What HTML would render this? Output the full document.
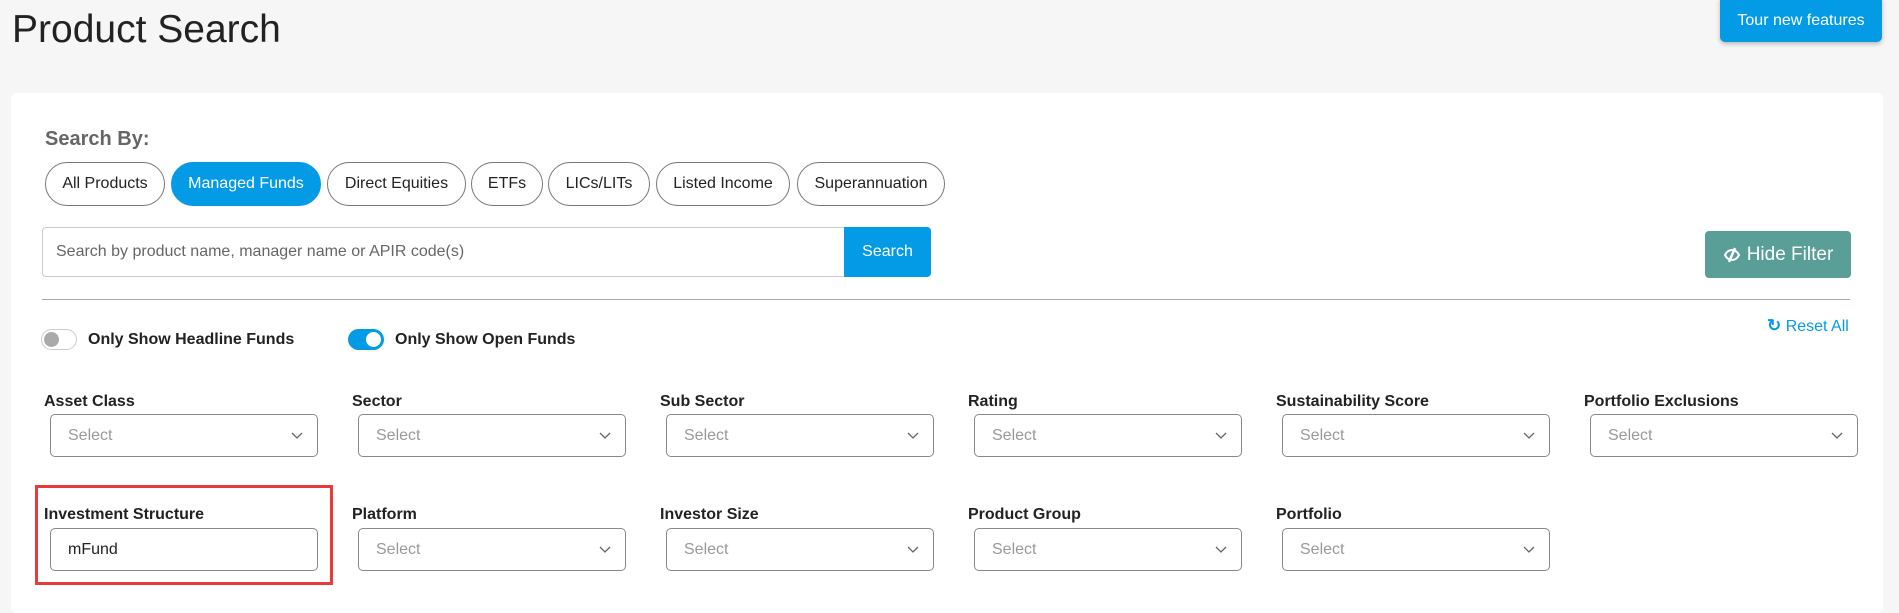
<!DOCTYPE html>
<html><head><style>
*{box-sizing:border-box;margin:0;padding:0}
body{width:1899px;height:593px;background:#f6f6f6;font-family:"Liberation Sans",Arial,sans-serif;position:relative;overflow:hidden;color:#222}
.abs{position:absolute}
h1{position:absolute;left:12px;top:8px;font-size:39px;font-weight:400;color:#222}
.tour{left:1720px;top:-4px;width:162px;height:46px;background:#039be5;color:#fff;border-radius:5px;font-size:16px;display:flex;align-items:center;justify-content:center;padding-top:4px;box-shadow:0 2px 5px rgba(0,0,0,.25)}
.card{left:11px;top:93px;width:1872px;height:520px;background:#fff;border-radius:6px}
.sb{left:45px;top:128px;font-size:20px;font-weight:bold;color:#666}
.pill{top:162px;height:44px;border:1px solid #777;border-radius:22px;font-size:16px;display:flex;align-items:center;justify-content:center;color:#222;background:#fff}
.pill.on{background:#039be5;border-color:#039be5;color:#fff}
.inp{left:42px;top:227px;width:803px;height:50px;border:1px solid #ccc;border-right:none;border-radius:4px 0 0 4px;font-size:16px;color:#666;padding:15px 0 0 13px}
.sbtn{left:844px;top:227px;width:87px;height:50px;background:#039be5;color:#fff;border-radius:0 4px 4px 0;font-size:16px;display:flex;align-items:center;justify-content:center}
.hide{left:1705px;top:231px;width:146px;height:47px;background:#5a9e98;color:#fff;border-radius:4px;font-size:19px;display:flex;align-items:center;justify-content:center;gap:6px}
.line{left:42px;top:299px;width:1808px;height:1px;background:#aaa}
.tg{top:329px;width:36px;height:21px;border-radius:11px}
.tl{top:331px;font-size:16px;font-weight:bold}
.lab{font-size:16px;font-weight:bold;color:#222}
.sel{width:268px;height:43px;border:1px solid #888;border-radius:5px;font-size:16px;color:#999;padding:12px 0 0 17px}
.sel svg{position:absolute;right:14px;top:17px}
</style></head><body>
<h1>Product Search</h1>
<div class="abs tour">Tour new features</div>
<div class="abs card"></div>
<div class="abs sb">Search By:</div>
<div class="abs pill" style="left:45px;width:120px">All Products</div>
<div class="abs pill on" style="left:171px;width:150px">Managed Funds</div>
<div class="abs pill" style="left:327px;width:139px">Direct Equities</div>
<div class="abs pill" style="left:471px;width:72px">ETFs</div>
<div class="abs pill" style="left:548px;width:102px">LICs/LITs</div>
<div class="abs pill" style="left:656px;width:134px">Listed Income</div>
<div class="abs pill" style="left:797px;width:148px">Superannuation</div>
<div class="abs inp">Search by product name, manager name or APIR code(s)</div>
<div class="abs sbtn">Search</div>
<div class="abs hide"><svg width="18" height="16" viewBox="0 0 18 16"><path d="M2 8c2-4 5-5 7-5s5 1 7 5c-2 4-5 5-7 5s-5-1-7-5z" fill="none" stroke="#fff" stroke-width="2"/><path d="M12 1L6 15" stroke="#fff" stroke-width="2.5"/></svg>Hide Filter</div>
<div class="abs line"></div>
<div class="abs tg" style="left:41px;background:#fff;border:1px solid #ccc"><div style="position:absolute;left:2px;top:2px;width:15px;height:15px;border-radius:50%;background:#aaa"></div></div>
<div class="abs tl" style="left:88px">Only Show Headline Funds</div>
<div class="abs tg" style="left:348px;background:#039be5"><div style="position:absolute;right:3px;top:3px;width:15px;height:15px;border-radius:50%;background:#fff"></div></div>
<div class="abs tl" style="left:395px">Only Show Open Funds</div>
<div class="abs" style="left:1767px;top:316px;font-size:16px;color:#039be5"><b style="font-size:17px">&#8635;</b> Reset All</div>

<div class="abs lab" style="left:44px;top:393px">Asset Class</div>
<div class="abs lab" style="left:352px;top:393px">Sector</div>
<div class="abs lab" style="left:660px;top:393px">Sub Sector</div>
<div class="abs lab" style="left:968px;top:393px">Rating</div>
<div class="abs lab" style="left:1276px;top:393px">Sustainability Score</div>
<div class="abs lab" style="left:1584px;top:393px">Portfolio Exclusions</div>

<div class="abs sel" style="left:50px;top:414px">Select<svg width="12" height="8"><path d="M1 1l5 5 5-5" fill="none" stroke="#666" stroke-width="1.3"/></svg></div>
<div class="abs sel" style="left:358px;top:414px">Select<svg width="12" height="8"><path d="M1 1l5 5 5-5" fill="none" stroke="#666" stroke-width="1.3"/></svg></div>
<div class="abs sel" style="left:666px;top:414px">Select<svg width="12" height="8"><path d="M1 1l5 5 5-5" fill="none" stroke="#666" stroke-width="1.3"/></svg></div>
<div class="abs sel" style="left:974px;top:414px">Select<svg width="12" height="8"><path d="M1 1l5 5 5-5" fill="none" stroke="#666" stroke-width="1.3"/></svg></div>
<div class="abs sel" style="left:1282px;top:414px">Select<svg width="12" height="8"><path d="M1 1l5 5 5-5" fill="none" stroke="#666" stroke-width="1.3"/></svg></div>
<div class="abs sel" style="left:1590px;top:414px">Select<svg width="12" height="8"><path d="M1 1l5 5 5-5" fill="none" stroke="#666" stroke-width="1.3"/></svg></div>

<div class="abs" style="left:35px;top:485px;width:298px;height:100px;border:3px solid #e53b3b"></div>
<div class="abs lab" style="left:44px;top:506px">Investment Structure</div>
<div class="abs lab" style="left:352px;top:506px">Platform</div>
<div class="abs lab" style="left:660px;top:506px">Investor Size</div>
<div class="abs lab" style="left:968px;top:506px">Product Group</div>
<div class="abs lab" style="left:1276px;top:506px">Portfolio</div>

<div class="abs sel" style="left:50px;top:528px;color:#222">mFund</div>
<div class="abs sel" style="left:358px;top:528px">Select<svg width="12" height="8"><path d="M1 1l5 5 5-5" fill="none" stroke="#666" stroke-width="1.3"/></svg></div>
<div class="abs sel" style="left:666px;top:528px">Select<svg width="12" height="8"><path d="M1 1l5 5 5-5" fill="none" stroke="#666" stroke-width="1.3"/></svg></div>
<div class="abs sel" style="left:974px;top:528px">Select<svg width="12" height="8"><path d="M1 1l5 5 5-5" fill="none" stroke="#666" stroke-width="1.3"/></svg></div>
<div class="abs sel" style="left:1282px;top:528px">Select<svg width="12" height="8"><path d="M1 1l5 5 5-5" fill="none" stroke="#666" stroke-width="1.3"/></svg></div>
</body></html>
